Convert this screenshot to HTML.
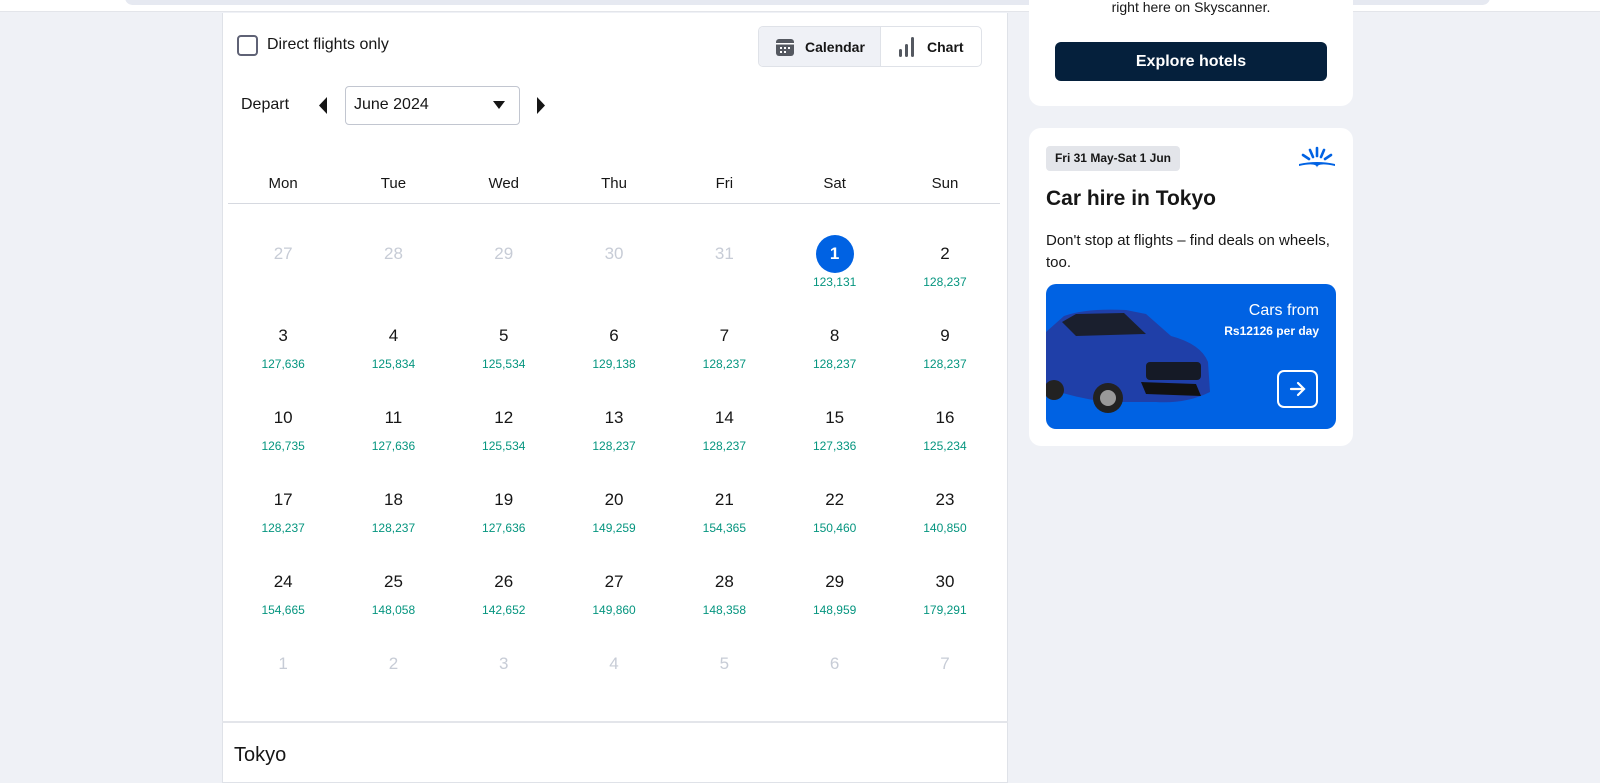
<!DOCTYPE html>
<html><head><meta charset="utf-8"><style>
*{box-sizing:border-box;margin:0;padding:0}
body{width:1600px;height:771px;overflow:hidden;background:#eff1f6;font-family:"Liberation Sans",sans-serif;color:#161616;position:relative}
.abs{position:absolute}
.topbar{left:0;top:0;width:1600px;height:12px;background:#fff;border-bottom:1px solid #e3e5ea}
.pill{left:125px;top:-10px;width:1365px;height:15px;background:#e6e9f1;border-radius:8px}
.panel{left:222px;top:13px;width:786px;height:770px;background:#fff;border:1px solid #dfe2e8;border-top:none}
.hdr{font-size:15px;color:#161616;width:110.3px;text-align:center}
.day{width:110.3px;text-align:center;font-size:17px;color:#161616}
.price{width:110.3px;text-align:center;font-size:12px;color:#05957f}
.mute{color:#c7ccd6}
.card{background:#fff;border-radius:12px}
</style></head><body>
<div class="abs topbar"></div><div class="abs pill"></div>
<div class="abs panel"></div>
<div class="abs" style="left:237px;top:35px;width:21px;height:21px;border:2px solid #5f6275;border-radius:4px"></div>
<div class="abs" style="left:267px;top:36px;font-size:16px">Direct flights only</div>
<div class="abs" style="left:758px;top:26px;width:224px;height:41px;border:1px solid #dfe2e8;border-radius:5px;overflow:hidden">
 <div class="abs" style="left:0;top:0;width:122px;height:41px;background:#eff1f6;border-right:1px solid #dfe2e8"></div>
 <svg class="abs" style="left:16px;top:10px" width="20" height="20" viewBox="0 0 20 20"><rect x="1" y="2" width="18" height="17" rx="3" fill="#545860"/><rect x="1" y="6" width="18" height="1.5" fill="#fff"/><g fill="#fff"><rect x="5" y="10" width="2" height="2"/><rect x="9" y="10" width="2" height="2"/><rect x="13" y="10" width="2" height="2"/><rect x="5" y="14" width="2" height="2"/><rect x="9" y="14" width="2" height="2"/></g></svg>
 <div class="abs" style="left:46px;top:12px;font-size:14px;font-weight:bold;color:#161616">Calendar</div>
 <svg class="abs" style="left:138px;top:9px" width="20" height="22" viewBox="0 0 20 22"><rect x="2" y="13" width="3" height="8" rx="1.5" fill="#545860"/><rect x="8" y="8" width="3" height="13" rx="1.5" fill="#545860"/><rect x="14" y="1" width="3" height="20" rx="1.5" fill="#545860"/></svg>
 <div class="abs" style="left:168px;top:12px;font-size:14px;font-weight:bold">Chart</div>
</div>
<div class="abs" style="left:241px;top:96px;font-size:16px">Depart</div>
<svg class="abs" style="left:317px;top:97px" width="12" height="17"><path d="M10 0 L2 8.5 L10 17Z" fill="#161616"/></svg>
<div class="abs" style="left:345px;top:86px;width:175px;height:39px;border:1px solid #c2c6d0;border-radius:4px"></div>
<div class="abs" style="left:354px;top:96px;font-size:16px">June 2024</div>
<svg class="abs" style="left:493px;top:101px" width="12" height="8"><path d="M0 0H12L6 8Z" fill="#161616"/></svg>
<svg class="abs" style="left:535px;top:97px" width="12" height="17"><path d="M2 0 L10 8.5 L2 17Z" fill="#161616"/></svg>
<div class="abs" style="left:228px;top:203px;width:772px;height:1px;background:#d6d9e0"></div>
<div class="abs" style="left:222px;top:721px;width:786px;height:2px;background:#e3e5ea"></div>
<div class="abs" style="left:234px;top:744px;font-size:20px">Tokyo</div>
<div id="cal"></div>
<div class="abs card" style="left:1029px;top:-20px;width:324px;height:126px"></div>
<div class="abs" style="left:1029px;top:-1px;width:324px;text-align:center;font-size:14px;color:#161616">right here on Skyscanner.</div>
<div class="abs" style="left:1055px;top:42px;width:272px;height:39px;background:#05203c;border-radius:6px;color:#fff;font-weight:bold;font-size:16px;text-align:center;line-height:39px">Explore hotels</div>
<div class="abs card" style="left:1029px;top:128px;width:324px;height:318px"></div>
<div class="abs" style="left:1046px;top:146px;width:134px;height:25px;background:#e3e5ea;border-radius:4px;font-size:12px;font-weight:bold;text-align:center;line-height:25px">Fri 31 May-Sat 1 Jun</div>
<svg class="abs" style="left:1298px;top:146px" width="38" height="24" viewBox="0 0 38 24"><g stroke="#0062e3" stroke-width="2.6" stroke-linecap="round"><line x1="19" y1="2" x2="19" y2="10"/><line x1="12" y1="4" x2="15" y2="11"/><line x1="26" y1="4" x2="23" y2="11"/><line x1="5" y1="9" x2="11" y2="13"/><line x1="33" y1="9" x2="27" y2="13"/></g><path d="M1 18 Q19 14 37 18 L37 20 Q19 16 19 22 Q19 16 1 20Z" fill="#0062e3"/></svg>
<div class="abs" style="left:1046px;top:187px;font-size:21px;font-weight:bold">Car hire in Tokyo</div>
<div class="abs" style="left:1046px;top:230px;width:292px;font-size:15px;line-height:22px">Don't stop at flights – find deals on wheels, too.</div>
<div class="abs" style="left:1046px;top:284px;width:290px;height:145px;background:#0062e3;border-radius:10px;overflow:hidden">
 <div class="abs" style="right:17px;top:18px;color:#fff;font-size:16px">Cars from</div>
 <div class="abs" style="right:17px;top:40px;color:#fff;font-size:12px;font-weight:bold">Rs12126 per day</div>
 <div class="abs" style="left:231px;top:86px;width:41px;height:38px;border:2px solid #fff;border-radius:7px"></div>
 <svg class="abs" style="left:243px;top:97px" width="18" height="16"><path d="M2 8H15M9 2L15 8L9 14" stroke="#fff" stroke-width="2.2" fill="none" stroke-linecap="round"/></svg>
 <svg class="abs" style="left:0;top:20px" width="170" height="110" viewBox="0 0 170 110"><path d="M0 28 L18 12 Q40 4 80 6 L100 10 L125 32 Q155 40 162 58 L164 88 Q140 100 110 98 L60 98 Q30 94 0 84Z" fill="#1f3fa8"/><path d="M16 18 L30 10 L78 9 L100 30 L30 32Z" fill="#1a1f2e"/><path d="M95 78 L150 80 L155 92 L100 90Z" fill="#111"/><circle cx="62" cy="94" r="15" fill="#222"/><circle cx="62" cy="94" r="8" fill="#999"/><circle cx="8" cy="86" r="10" fill="#222"/><rect x="100" y="58" width="55" height="18" rx="4" fill="#151a26"/></svg>
</div>
<script>
var rows=[[27,28,29,30,31,1,2],[3,4,5,6,7,8,9],[10,11,12,13,14,15,16],[17,18,19,20,21,22,23],[24,25,26,27,28,29,30],[1,2,3,4,5,6,7]];
var pr=[[0,0,0,0,0,"123,131","128,237"],["127,636","125,834","125,534","129,138","128,237","128,237","128,237"],["126,735","127,636","125,534","128,237","128,237","127,336","125,234"],["128,237","128,237","127,636","149,259","154,365","150,460","140,850"],["154,665","148,058","142,652","149,860","148,358","148,959","179,291"],[0,0,0,0,0,0,0]];
var h="",hd=["Mon","Tue","Wed","Thu","Fri","Sat","Sun"];
for(var c=0;c<7;c++){var x=228+c*110.3;h+='<div class="abs hdr" style="left:'+x+'px;top:175px">'+hd[c]+'</div>';}
for(var r=0;r<6;r++)for(var c=0;c<7;c++){var x=228+c*110.3,y=244+r*82;var m=(r==0&&c<5)||r==5;
if(r==0&&c==5){h+='<div class="abs" style="left:'+(x+36)+'px;top:235px;width:38px;height:38px;border-radius:50%;background:#0062e3"></div><div class="abs day" style="left:'+x+'px;top:'+y+'px;color:#fff;font-weight:bold">1</div>';}
else h+='<div class="abs day'+(m?' mute':'')+'" style="left:'+x+'px;top:'+y+'px">'+rows[r][c]+'</div>';
if(pr[r][c])h+='<div class="abs price" style="left:'+x+'px;top:'+(y+31)+'px">'+pr[r][c]+'</div>';}
document.getElementById("cal").innerHTML=h;
</script>
</body></html>
